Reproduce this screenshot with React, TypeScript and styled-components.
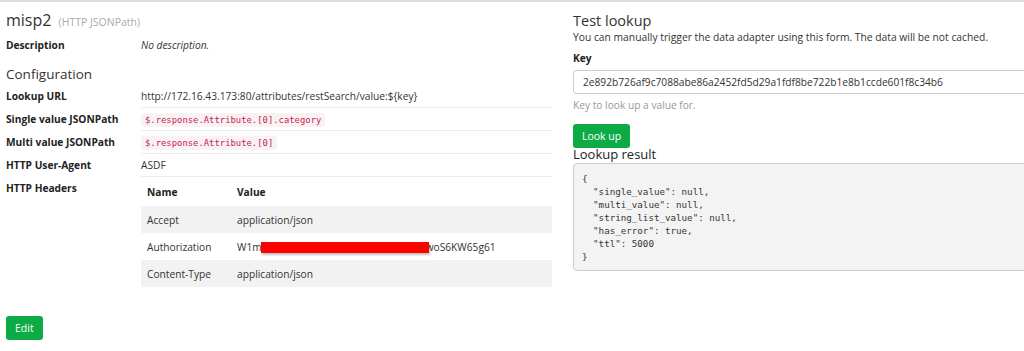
import styled, { createGlobalStyle } from 'styled-components';

const GlobalStyle = createGlobalStyle`
  html, body {
    margin: 0;
    padding: 0;
    background: #fff;
    overflow: hidden;
  }
  body {
    font-family: "Open Sans", "DejaVu Sans", sans-serif;
    font-size: 10.2px;
    color: #333;
  }
`;

const Page = styled.div`
  border-top: 2px solid #dcdcdc;
  padding-left: 6px;
  width: 1200px;
`;

const Columns = styled.div`
  display: grid;
  grid-template-columns: 546px 546px;
  column-gap: 21px;
  align-items: start;
`;

const Column = styled.div`
  display: flex;
  flex-direction: column;
`;

const Title = styled.h2`
  margin: 8px 0 0;
  font-size: 16px;
  line-height: 20px;
  font-weight: 400;
  color: #333;
`;

const Subtitle = styled.small`
  font-size: 10.5px;
  color: #aaa;
  margin-left: 3px;
`;

const SectionTitle = styled.h3<{ $top?: number; $size?: number; $lh?: number }>`
  margin: ${p => p.$top ?? 0}px 0 2px;
  font-size: ${p => p.$size ?? 13.5}px;
  line-height: ${p => p.$lh ?? 18}px;
  font-weight: 400;
  color: #333;
`;

const DefList = styled.dl<{ $top?: number }>`
  margin: ${p => p.$top ?? 0}px 0 0;
  display: grid;
  grid-template-columns: 135px 1fr;
`;

const Term = styled.dt`
  font-weight: 700;
  line-height: 16px;
  padding: 3px 0;
  color: #222;
`;

const Detail = styled.dd<{ $plain?: boolean }>`
  margin: 0;
  line-height: 16px;
  height: 16px;
  padding: 3px 0;
  border-bottom: ${p => (p.$plain ? 'none' : '1px solid #eee')};
`;

const TableDetail = styled.dd`
  margin: 0;
`;

const Italic = styled.em`
  font-style: italic;
`;

const Code = styled.code`
  font-family: "DejaVu Sans Mono", "Liberation Mono", monospace;
  font-size: 8.9px;
  line-height: 1;
  color: #c7254e;
  background: #f9f2f4;
  padding: 2px 4px;
  border-radius: 3px;
`;

const Table = styled.table`
  width: 100%;
  border-collapse: collapse;
  table-layout: fixed;
`;

const HeadCell = styled.th<{ $w?: number }>`
  text-align: left;
  font-weight: 700;
  line-height: 16px;
  padding: 7px 6px 6px;
  width: ${p => (p.$w ? `${p.$w}px` : 'auto')};
  color: #222;
`;

const BodyRow = styled.tr<{ $striped?: boolean }>`
  background: ${p => (p.$striped ? '#f2f2f2' : '#fff')};
`;

const Cell = styled.td`
  line-height: 16px;
  padding: 6px 6px 5px;
  white-space: nowrap;
`;

const Redacted = styled.span`
  display: inline-block;
  width: 168px;
  height: 11px;
  margin: 0 -3px 0 -1px;
  vertical-align: -2px;
  background: #ff0000;
  box-shadow: 1px 2px 2px rgba(0, 0, 0, 0.25);
  position: relative;
`;

const Lead = styled.p`
  margin: 0;
  font-size: 10.3px;
  line-height: 13px;
`;

const Label = styled.label`
  display: block;
  margin-top: 7px;
  font-weight: 700;
  line-height: 14px;
  color: #222;
`;

const Input = styled.input`
  margin-top: 5px;
  box-sizing: border-box;
  height: 24px;
  width: 100%;
  border: 1px solid #ccc;
  border-radius: 3px;
  padding: 0 9px;
  font-family: "Open Sans", sans-serif;
  font-size: 10.2px;
  color: #333;
  outline: none;
`;

const Help = styled.span`
  display: block;
  margin-top: 4px;
  line-height: 14px;
  color: #999;
`;

const Button = styled.button<{ $top: number }>`
  align-self: flex-start;
  margin-top: ${p => p.$top}px;
  height: 24px;
  padding: 0 9px;
  border: none;
  border-radius: 3px;
  background: #0dab45;
  color: #fff;
  font-family: "Open Sans", sans-serif;
  font-size: 10.5px;
  cursor: pointer;
`;

const ResultTitle = styled.h3`
  margin: 0;
  font-size: 13px;
  line-height: 13px;
  font-weight: 400;
  color: #222;
`;

const Pre = styled.pre`
  margin: 2px 0 0;
  padding: 8px 8px 7px;
  background: #f3f3f3;
  border: 1px solid #ccc;
  border-radius: 4px;
  font-family: "DejaVu Sans Mono", "Liberation Mono", monospace;
  font-size: 9.2px;
  line-height: 13px;
  color: #333;
`;

const result = `{
  "single_value": null,
  "multi_value": null,
  "string_list_value": null,
  "has_error": true,
  "ttl": 5000
}`;

export default function App() {
  return (
    <>
      <GlobalStyle />
      <Page>
        <Columns>
          <Column>
            <Title>
              misp2 <Subtitle>(HTTP JSONPath)</Subtitle>
            </Title>
            <DefList $top={2}>
              <Term>Description</Term>
              <Detail $plain>
                <Italic>No description.</Italic>
              </Detail>
            </DefList>
            <SectionTitle $top={9}>Configuration</SectionTitle>
            <DefList>
              <Term>Lookup URL</Term>
              <Detail>http://172.16.43.173:80/attributes/restSearch/value:${'{key}'}</Detail>
              <Term>Single value JSONPath</Term>
              <Detail>
                <Code>$.response.Attribute.[0].category</Code>
              </Detail>
              <Term>Multi value JSONPath</Term>
              <Detail>
                <Code>$.response.Attribute.[0]</Code>
              </Detail>
              <Term>HTTP User-Agent</Term>
              <Detail>ASDF</Detail>
              <Term>HTTP Headers</Term>
              <TableDetail>
                <Table>
                  <thead>
                    <tr>
                      <HeadCell $w={78}>Name</HeadCell>
                      <HeadCell>Value</HeadCell>
                    </tr>
                  </thead>
                  <tbody>
                    <BodyRow $striped>
                      <Cell>Accept</Cell>
                      <Cell>application/json</Cell>
                    </BodyRow>
                    <BodyRow>
                      <Cell>Authorization</Cell>
                      <Cell>
                        W1m<Redacted />woS6KW65g61
                      </Cell>
                    </BodyRow>
                    <BodyRow $striped>
                      <Cell>Content-Type</Cell>
                      <Cell>application/json</Cell>
                    </BodyRow>
                  </tbody>
                </Table>
              </TableDetail>
            </DefList>
          </Column>

          <Column>
            <SectionTitle $top={11} $size={14.5} $lh={16}>
              Test lookup
            </SectionTitle>
            <Lead>You can manually trigger the data adapter using this form. The data will be not cached.</Lead>
            <Label htmlFor="key">Key</Label>
            <Input
              id="key"
              readOnly
              value="2e892b726af9c7088abe86a2452fd5d29a1fdf8be722b1e8b1ccde601f8c34b6"
            />
            <Help>Key to look up a value for.</Help>
            <Button $top={12}>Look up</Button>
            <ResultTitle>Lookup result</ResultTitle>
            <Pre>{result}</Pre>
          </Column>
        </Columns>
        <Button $top={29}>Edit</Button>
      </Page>
    </>
  );
}
